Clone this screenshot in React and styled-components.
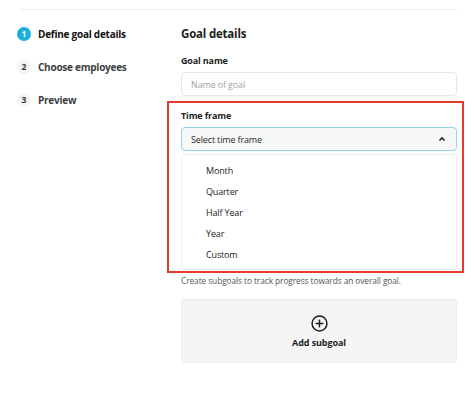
import React, { useState } from 'react'
import styled, { createGlobalStyle } from 'styled-components'

const steps = [
  { n: 1, label: 'Define goal details', active: true },
  { n: 2, label: 'Choose employees' },
  { n: 3, label: 'Preview' },
]

const timeFrames = ['Month', 'Quarter', 'Half Year', 'Year', 'Custom']

const GlobalStyle = createGlobalStyle`
  html, body {
    margin: 0;
    padding: 0;
    background: #ffffff;
  }
  body {
    font-family: 'Open Sans', 'Liberation Sans', sans-serif;
    color: #1d1d1d;
  }
`

const App = () => {
  const [name, setName] = useState('')

  return (
    <>
      <GlobalStyle />
      <Page>
        <Frame>
          <Sidebar>
            {steps.map((s) => (
              <Step key={s.n}>
                <StepNumber active={s.active}>{s.n}</StepNumber>
                <StepLabel active={s.active}>{s.label}</StepLabel>
              </Step>
            ))}
          </Sidebar>

          <Main>
            <Title>Goal details</Title>

            <Label>Goal name</Label>
            <Input
              type={'text'}
              value={name}
              onChange={(e) => setName(e.target.value)}
              placeholder="Name of goal"
            />

            <Highlight>
              <Label>Time frame</Label>
              <SelectBox>
                <span>Select time frame</span>
                <svg width="8" height="6" viewBox="0 0 8 6">
                  <polyline points="1.5,4.5 4,2 6.5,4.5" fill="none" stroke="#222" strokeWidth="1.6" />
                </svg>
              </SelectBox>
              <Menu>
                {timeFrames.map((t) => (
                  <Option key={t}>{t}</Option>
                ))}
              </Menu>
            </Highlight>

            <Help>Create subgoals to track progress towards an overall goal.</Help>

            <AddSubgoal>
              <svg width="17" height="17" viewBox="0 0 16 16">
                <circle cx="8" cy="8" r="7" fill="none" stroke="#1d1d1d" strokeWidth="1.4" />
                <line x1="8" y1="4.3" x2="8" y2="11.7" stroke="#1d1d1d" strokeWidth="1.4" />
                <line x1="4.3" y1="8" x2="11.7" y2="8" stroke="#1d1d1d" strokeWidth="1.4" />
              </svg>
              <span>Add subgoal</span>
            </AddSubgoal>
          </Main>
        </Frame>
      </Page>
    </>
  )
}

const Page = styled.div`
  padding-top: 9px;
  width: 474px;
  height: 402px;
  box-sizing: border-box;
  overflow: hidden;
`
const Frame = styled.div`
  margin: 0 17px 0 20px;
  border-top: 1px solid #f0f0f0;
  display: flex;
`
const Sidebar = styled.div`
  width: 161px;
  flex-shrink: 0;
  padding-top: 7px;
`
const Step = styled.div`
  height: 33px;
  display: flex;
  align-items: center;
`
const StepNumber = styled.div`
  width: 14px;
  height: 14px;
  margin-left: -3px;
  border-radius: 50%;
  display: flex;
  align-items: center;
  justify-content: center;
  font-size: 8.5px;
  font-weight: 700;
  background: ${(p) => (p.active ? '#19b1da' : '#f4f4f5')};
  color: ${(p) => (p.active ? '#ffffff' : '#333333')};
`
const StepLabel = styled.div`
  margin-left: 7px;
  font-size: 10px;
  letter-spacing: -0.25px;
  font-weight: 700;
  color: ${(p) => (p.active ? '#111111' : '#3e3e3e')};
`
const Main = styled.div`
  flex: 1;
  padding-top: 16px;
`
const Title = styled.div`
  font-size: 11.5px;
  letter-spacing: -0.2px;
  line-height: 16px;
  font-weight: 700;
  margin-bottom: 12px;
`
const Label = styled.div`
  font-size: 9px;
  letter-spacing: -0.15px;
  line-height: 14px;
  font-weight: 700;
  margin-bottom: 4px;
`
const Input = styled.input`
  display: block;
  width: 100%;
  height: 24px;
  box-sizing: border-box;
  border: 1px solid #e7e7e7;
  border-radius: 4px;
  padding: 0 9px;
  font-family: inherit;
  font-size: 9px;
  letter-spacing: -0.15px;
  color: #222;
  outline: none;

  &::placeholder {
    color: #a3a3a3;
  }
`
const Highlight = styled.div`
  margin: 5px -7px 0 -14px;
  border: 2px solid #e33b2c;
  padding: 6px 5px 1px 12px;
`
const SelectBox = styled.div`
  height: 24px;
  box-sizing: border-box;
  border: 1px solid #8fd6e8;
  border-radius: 4px;
  background: #f6f7f7;
  padding: 0 10px 0 9px;
  display: flex;
  align-items: center;
  justify-content: space-between;
  font-size: 9px;
  letter-spacing: -0.15px;
  color: #2a2a2a;
`
const Menu = styled.div`
  margin-top: 3px;
  border: 1px solid #ececec;
  border-radius: 4px;
  padding: 5px 0 4px;
  background: #ffffff;
`
const Option = styled.div`
  height: 21px;
  line-height: 21px;
  padding-left: 24px;
  font-size: 9px;
  letter-spacing: -0.15px;
  color: #222;
`
const Help = styled.div`
  margin-top: 2px;
  font-size: 8.4px;
  letter-spacing: -0.1px;
  line-height: 12px;
  color: #555;
`
const AddSubgoal = styled.div`
  margin-top: 12px;
  height: 64px;
  box-sizing: border-box;
  border: 1px solid #ececec;
  border-radius: 3px;
  background: #f5f5f5;
  display: flex;
  flex-direction: column;
  align-items: center;
  justify-content: center;
  gap: 4px;
  padding-top: 2px;
  font-size: 9px;
  letter-spacing: -0.1px;
  font-weight: 700;
`

export default App
